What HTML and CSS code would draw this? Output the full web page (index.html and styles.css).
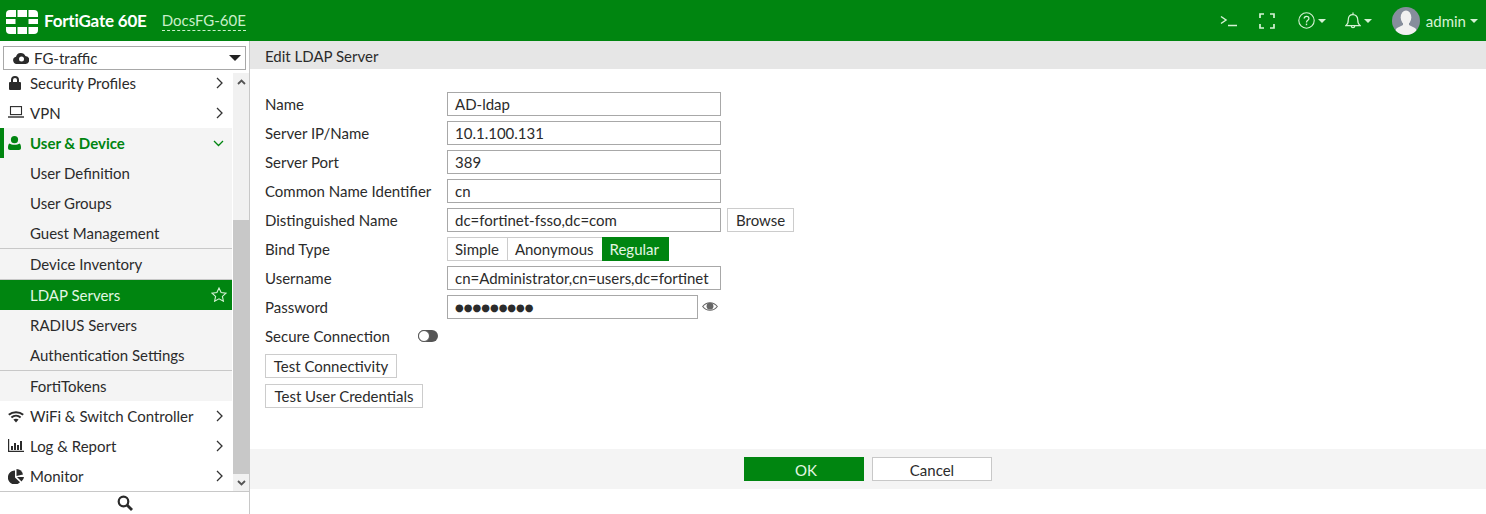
FILE: index.html
```html
<!DOCTYPE html>
<html lang="en">
<head>
<meta charset="utf-8">
<title>Edit LDAP Server</title>
<link rel="stylesheet" href="styles.css">
</head>
<body>
<header class="topbar">
  <svg class="logo" width="32" height="24" viewBox="0 0 32 24" fill="#fff">
    <path d="M4 0h6v7H0V4a4 4 0 0 1 4-4z"/><rect x="11.500" width="9.500" height="7"/><path d="M22.500 0H28a4 4 0 0 1 4 4v3h-9.500z"/>
    <rect y="9" width="9.500" height="5"/><rect x="22.500" y="9" width="9.500" height="5"/>
    <path d="M0 17h10v7H4a4 4 0 0 1-4-4z"/><rect x="11.500" y="17" width="9.500" height="7"/><path d="M22.500 17H32v3a4 4 0 0 1-4 4h-5.500z"/>
  </svg>
  <span class="brand">FortiGate 60E</span>
  <span class="hostname">DocsFG-60E</span>
  <div class="top-actions">
    <svg class="t-cli" width="17" height="12" viewBox="0 0 17 12" fill="none" stroke="#d5f2d5" stroke-width="1.5"><path d="M1 1.5 6 5 1 8.5M8 10.5h9"/></svg>
    <svg class="t-full" width="16" height="16" viewBox="0 0 16 16" fill="none" stroke="#d5f2d5" stroke-width="1.7"><path d="M1 5V1h4M11 1h4v4M15 11v4h-4M5 15H1v-4"/></svg>
    <span class="t-menu t-help"><svg width="17" height="17" viewBox="0 0 17 17" fill="none" stroke="#d5f2d5" stroke-width="1.1"><circle cx="8.5" cy="8.5" r="7.7"/><path d="M6.2 6.6c0-3 4.7-3 4.7-.2 0 1.900-2.400 1.900-2.400 4" stroke-width="1.300"/><path d="M8.500 11.600v1.600" stroke-width="1.400"/></svg><i class="caret"></i></span>
    <span class="t-menu t-bell"><svg width="16" height="17" viewBox="0 0 16 17" fill="none" stroke="#d5f2d5" stroke-width="1.200"><path d="M1 13.600c2-1.500 2.300-3.400 2.300-6 0-3 2-5 4.700-5s4.700 2 4.700 5c0 2.600.3 4.500 2.300 6z"/><path d="M6.300 14c0 2.200 3.400 2.200 3.400 0M8 .5v2"/></svg><i class="caret"></i></span>
    <svg class="avatar" width="28" height="28" viewBox="0 0 28 28"><circle cx="14" cy="14" r="14" fill="#868e9c"/><clipPath id="av"><circle cx="14" cy="14" r="14"/></clipPath><g clip-path="url(#av)" fill="#f1f1f1"><ellipse cx="14" cy="10.500" rx="5.300" ry="7"/><path d="M11 15h6v3l6 3c1.500 1 2 3 2 7H3c0-4 .5-6 2-7l6-3z"/></g></svg>
    <span class="t-menu t-user">admin<i class="caret"></i></span>
  </div>
</header>
<div class="shell">
  <aside class="sidebar">
    <div class="select-row">
      <div class="vdom">
        <svg width="16" height="12" viewBox="0 0 16 12"><path fill="#2b2b2b" d="M4 12a3.700 3.700 0 0 1-1-7.300A5 5 0 0 1 12.400 4 4 4 0 0 1 12 12z"/><circle cx="8.500" cy="7" r="2.500" fill="#fff"/></svg>
        <span>FG-traffic</span><i class="vdom-caret"></i>
      </div>
    </div>
    <div class="nav-wrap">
      <nav class="nav">
        <a class="item"><svg class="ic" width="14" height="14" viewBox="0 0 14 14" fill="#2b2b2b"><path d="M2 6h1V4a4 4 0 0 1 8 0v2h1a1 1 0 0 1 1 1v6a1 1 0 0 1-1 1H2a1 1 0 0 1-1-1V7a1 1 0 0 1 1-1zm3 0h4V4a2 2 0 0 0-4 0z"/></svg><span>Security Profiles</span><svg class="chev" width="8" height="12" viewBox="0 0 8 12"><path d="M1 1l5 5-5 5" fill="none" stroke="#333" stroke-width="1.300"/></svg></a>
        <a class="item"><svg class="ic" width="16" height="12" viewBox="0 0 16 12" fill="none" stroke="#2b2b2b" stroke-width="1.100"><rect x="2.500" y=".6" width="11" height="8"/><path d="M0 11h16" stroke-width="1.400"/></svg><span>VPN</span><svg class="chev" width="8" height="12" viewBox="0 0 8 12"><path d="M1 1l5 5-5 5" fill="none" stroke="#333" stroke-width="1.300"/></svg></a>
        <a class="item open"><svg class="ic" width="13" height="14" viewBox="0 0 13 14" fill="#008510"><circle cx="6.500" cy="3.700" r="3.600"/><path d="M1.500 7.500c1 .9 3 1.300 5 1.300s4-.4 5-1.300c1 .5 1.500 2 1.500 4.500 0 1.300-.7 2-2 2H2c-1.300 0-2-.7-2-2 0-2.500.5-4 1.500-4.500z"/></svg><span>User &amp; Device</span><svg class="chev-down" width="11" height="7" viewBox="0 0 11 7"><path d="M1 1l4.500 4.500L10 1" fill="none" stroke="#008510" stroke-width="1.300"/></svg></a>
        <div class="group"><a class="item sub">User Definition</a><a class="item sub">User Groups</a><a class="item sub">Guest Management</a></div>
        <div class="group"><a class="item sub">Device Inventory</a></div>
        <div class="group"><a class="item sub active"><span>LDAP Servers</span><svg class="star" width="16" height="15" viewBox="0 0 16 15"><path d="M8 1l2.100 4.500 4.900.6-3.600 3.300 1 4.800L8 11.800l-4.400 2.400 1-4.800L1 6.100l4.900-.6z" fill="none" stroke="#d5f2d5" stroke-width="1.100"/></svg></a><a class="item sub">RADIUS Servers</a><a class="item sub">Authentication Settings</a></div>
        <div class="group last"><a class="item sub">FortiTokens</a></div>
        <a class="item"><svg class="ic wifi" width="16" height="12" viewBox="0 0 16 12" fill="none" stroke="#2b2b2b" stroke-width="2"><path d="M.8 3.800c4-3.500 10.400-3.500 14.400 0M3.400 6.500c2.700-2.300 6.500-2.300 9.200 0"/><path d="M5.400 8.400 8 11.500l2.600-3.100C9 7.400 7 7.400 5.400 8.400z" fill="#2b2b2b" stroke="none"/></svg><span>WiFi &amp; Switch Controller</span><svg class="chev" width="8" height="12" viewBox="0 0 8 12"><path d="M1 1l5 5-5 5" fill="none" stroke="#333" stroke-width="1.300"/></svg></a>
        <a class="item"><svg class="ic" width="16" height="13" viewBox="0 0 16 13" fill="#2b2b2b"><path d="M0 0h1.200v11.800H16V13H0z"/><rect x="3" y="7" width="2" height="4"/><rect x="6" y="4" width="2" height="7"/><rect x="9" y="6" width="2" height="5"/><rect x="12" y="2" width="2" height="9"/></svg><span>Log &amp; Report</span><svg class="chev" width="8" height="12" viewBox="0 0 8 12"><path d="M1 1l5 5-5 5" fill="none" stroke="#333" stroke-width="1.300"/></svg></a>
        <a class="item"><svg class="ic" width="16" height="15" viewBox="0 0 16 15" fill="#2b2b2b"><path d="M7 1.500v7l5 4.800A7 7 0 1 1 7 1.500z"/><path d="M8.500 0A7 7 0 0 1 15 5.500L8.500 7z"/><path d="M9 8h7a7 7 0 0 1-2.500 4.500z"/></svg><span>Monitor</span><svg class="chev" width="8" height="12" viewBox="0 0 8 12"><path d="M1 1l5 5-5 5" fill="none" stroke="#333" stroke-width="1.300"/></svg></a>
      </nav>
      <div class="scrollbar">
        <div class="sb-btn"><svg width="9" height="6" viewBox="0 0 9 6"><path d="M1 5l3.500-3.500L8 5" fill="none" stroke="#555" stroke-width="1.800"/></svg></div>
        <div class="sb-track"><div class="sb-thumb"></div></div>
        <div class="sb-btn"><svg width="9" height="6" viewBox="0 0 9 6"><path d="M1 1l3.500 3.500L8 1" fill="none" stroke="#555" stroke-width="1.800"/></svg></div>
      </div>
    </div>
    <div class="search"><svg width="16" height="16" viewBox="0 0 16 16" fill="none" stroke="#2b2b2b"><circle cx="6.500" cy="6.500" r="4.800" stroke-width="2.200"/><path d="M10 10l5 5" stroke-width="2.800"/></svg></div>
  </aside>
  <main class="main">
    <h1 class="title">Edit LDAP Server</h1>
    <form class="form">
      <label class="lbl">Name</label><div class="field"><div class="input">AD-ldap</div></div>
      <label class="lbl">Server IP/Name</label><div class="field"><div class="input">10.1.100.131</div></div>
      <label class="lbl">Server Port</label><div class="field"><div class="input">389</div></div>
      <label class="lbl">Common Name Identifier</label><div class="field"><div class="input">cn</div></div>
      <label class="lbl">Distinguished Name</label><div class="field"><div class="input">dc=fortinet-fsso,dc=com</div><button type="button" class="btn browse">Browse</button></div>
      <label class="lbl">Bind Type</label><div class="field seg"><span class="seg-item">Simple</span><span class="seg-item">Anonymous</span><span class="seg-item on">Regular</span></div>
      <label class="lbl">Username</label><div class="field"><div class="input">cn=Administrator,cn=users,dc=fortinet</div></div>
      <label class="lbl">Password</label><div class="field"><div class="input pw">●●●●●●●●●</div><svg class="eye" width="16" height="11" viewBox="0 0 16 11"><path d="M.7 5.500C4.500.5 11.500.5 15.300 5.500 11.500 10.500 4.500 10.500.7 5.500z" fill="none" stroke="#666" stroke-width="1.100"/><circle cx="8" cy="5.200" r="3.400" fill="#666"/></svg></div>
      <label class="lbl">Secure Connection</label><div class="field toggle-field"><span class="toggle"><i></i></span></div>
      <div class="actions"><button type="button" class="btn conn">Test Connectivity</button><button type="button" class="btn cred">Test User Credentials</button></div>
    </form>
    <footer class="footer"><button type="button" class="fbtn ok">OK</button><button type="button" class="fbtn">Cancel</button></footer>
  </main>
</div>
</body>
</html>
```
FILE: styles.css
```css
* { box-sizing: border-box; }
html, body { margin: 0; height: 100%; overflow: hidden; }
body { font: 15px/20px Lato, sans-serif; color: #2b2b2b; background: #fff; }
.topbar { height: 41px; background: #008510; display: flex; align-items: center; padding-left: 6px; color: #fff; }
.logo { margin-right: 6px; margin-top: 3px; }
.brand { font-size: 17px; font-weight: 700; letter-spacing: -0.2px; }
.hostname { margin-left: 15px; font-size: 15px; color: #c9efc9; border-bottom: 1px dashed #c9efc9; line-height: 20px; }
.top-actions { margin-left: auto; display: flex; align-items: center; color: #d5f2d5; padding-right: 8px; }
.t-menu { display: inline-flex; align-items: center; }
.t-cli { margin-right: 22px; }
.t-full { margin-right: 23px; }
.t-help { margin-right: 19px; }
.t-bell { margin-right: 20px; }
.avatar { margin-right: 6px; }
.t-user { font-size: 15px; }
.caret { display: inline-block; margin-left: 3px; border: 4px solid transparent; border-top-color: #d5f2d5; border-bottom: 0; }
.t-user .caret { margin-left: 4px; }
.shell { display: flex; height: 473px; }
.sidebar { width: 250px; border-right: 1px solid #c8c8c8; display: flex; flex-direction: column; }
.select-row { height: 32px; padding: 5px 3px 3px; }
.vdom { width: 243px; height: 24px; border: 1px solid #a8a8a8; display: flex; align-items: center; padding-left: 9px; gap: 5px; font-size: 15px; position: relative; }
.vdom-caret { margin-left: auto; margin-right: 4px; border: 6px solid transparent; border-top-color: #222; border-bottom: 0; }
.nav-wrap { height: 418px; overflow: hidden; display: flex; }
.nav { width: 232px; margin-top: -5px; flex: none; display: block; }
.item { height: 30px; display: flex; align-items: center; padding-left: 30px; position: relative; line-height: 30px; }
.ic { position: absolute; left: 8px; top: 8px; }
.wifi { top: 10px; }
.chev { position: absolute; right: 8px; top: 9px; }
.chev-down { position: absolute; right: 8px; top: 12px; }
.open { background: #f4f4f4; color: #008510; font-weight: 700; box-shadow: inset 4px 0 0 #008510; }
.group { background: #f4f4f4; border-bottom: 1px solid #c8c8c8; }
.group.last { border-bottom: 0; }
.active { background: #008510; color: #e3f7e3; margin-top: 0; }
.star { position: absolute; right: 5px; top: 7px; }
.scrollbar { width: 16px; flex: none; margin-left: 1px; background: #f1f1f1; display: flex; flex-direction: column; }
.sb-btn { height: 17px; display: flex; align-items: center; justify-content: center; }
.sb-track { flex: 1; display: flex; flex-direction: column; justify-content: flex-end; }
.sb-thumb { height: 254px; background: #c8c8c8; }
.search { height: 23px; border-top: 1px solid #c8c8c8; display: flex; justify-content: center; align-items: center; }
.main { flex: 1; position: relative; display: flex; flex-direction: column; }
.title { margin: 0; height: 28px; background: #e6e6e6; font-size: 15px; font-weight: 400; line-height: 30px; padding-left: 15px; }
.form { display: grid; grid-template-columns: 182px 1fr; grid-auto-rows: 24px; row-gap: 5px; padding: 23px 0 0 15px; height: 380px; align-content: start; }
.lbl { line-height: 24px; white-space: nowrap; }
.field { display: flex; align-items: center; }
.input { width: 274px; height: 24px; border: 1px solid #a8a8a8; padding-left: 7px; line-height: 23px; white-space: nowrap; overflow: hidden; }
.input.pw { width: 251px; font-family: "DejaVu Sans", sans-serif; font-size: 10px; }
.eye { margin-left: 4px; margin-top: -2px; }
.btn { height: 24px; padding: 0 8px; background: #fff; border: 1px solid #ccc; font: inherit; color: inherit; line-height: 22px; }
.browse { margin-left: 6px; width: 67px; }
.conn { width: 132px; padding: 0; }
.cred { width: 158px; padding: 0; }
.seg-item { height: 24px; border: 1px solid #ccc; line-height: 23px; padding: 0 8px 0 7px; margin-right: -1px; }
.seg-item.on { background: #008510; border-color: #008510; color: #e3f7e3; margin-right: 0; padding: 0 9px 0 7px; }
.toggle { width: 20px; height: 12px; border-radius: 6px; background: #555; display: block; margin-left: -29px; position: relative; }
.toggle i { display: block; width: 12px; height: 12px; border-radius: 6px; background: #fff; border: 1px solid #555; }
.actions { grid-column: 1 / -1; display: flex; flex-direction: column; align-items: flex-start; gap: 6px; margin-top: 1px; }
.footer { height: 40px; background: #f4f4f4; display: flex; justify-content: center; align-items: center; gap: 8px; }
.fbtn { width: 120px; height: 24px; background: #fff; border: 1px solid #c8c8c8; font: inherit; color: inherit; padding: 2px 0 0; }
.fbtn.ok { background: #008510; border-color: #008510; color: #e3f7e3; padding-left: 4px; }
```
